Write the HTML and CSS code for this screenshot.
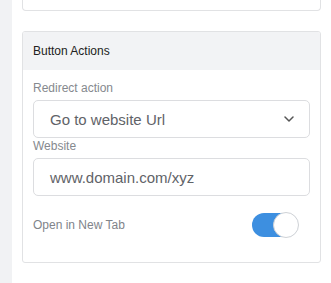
FILE: index.html
```html
<!DOCTYPE html>
<html>
<head>
<meta charset="utf-8">
<link rel="stylesheet" href="styles.css">
</head>
<body>
<div class="layout">
  <div class="sidebar"></div>
  <div class="main">
    <div class="card card-top"></div>
    <div class="card panel">
      <div class="panel-head">Button Actions</div>
      <div class="panel-body">
        <div class="label">Redirect action</div>
        <div class="field select">
          <span>Go to website Url</span>
          <svg class="chev" width="10" height="6" viewBox="0 0 10 6"><path d="M1 1 L5 5 L9 1" fill="none" stroke="#555" stroke-width="1.5" stroke-linecap="round" stroke-linejoin="round"/></svg>
        </div>
        <div class="label label-2">Website</div>
        <div class="field">www.domain.com/xyz</div>
        <div class="toggle-row">
          <span class="toggle-label">Open in New Tab</span>
          <span class="toggle"><span class="knob"></span></span>
        </div>
      </div>
    </div>
  </div>
</div>
</body>
</html>
```

FILE: styles.css
```css
html, body {
  margin: 0;
  padding: 0;
  background: #ffffff;
  font-family: "Liberation Sans", Arial, sans-serif;
}
.layout {
  display: flex;
  height: 283px;
  overflow: hidden;
}
.sidebar {
  width: 12px;
  flex: none;
  background: #f1f2f4;
}
.main {
  flex: 1;
  padding: 0 10px;
}
.card {
  border: 1px solid #e1e2e4;
  background: #fff;
}
.card-top {
  height: 10px;
  border-top: none;
  border-radius: 0 0 4px 4px;
}
.panel {
  margin-top: 20px;
  border-radius: 3px;
  overflow: hidden;
}
.panel-head {
  height: 38px;
  line-height: 38px;
  background: #f2f3f5;
  padding-left: 10px;
  font-size: 12px;
  color: #222;
}
.panel-body {
  padding: 11px 10px 25px;
}
.label {
  font-size: 12px;
  line-height: 15px;
  color: #85898e;
  margin-bottom: 4px;
}
.label-2 {
  margin-top: 1px;
}
.field {
  height: 36px;
  border: 1px solid #dcdde0;
  border-radius: 5px;
  display: flex;
  align-items: center;
  padding: 0 15px 0 16px;
  font-size: 15px;
  color: #5f6368;
}
.select {
  justify-content: space-between;
}
.chev {
  display: block;
}
.toggle-row {
  margin-top: 17px;
  height: 24px;
  display: flex;
  align-items: center;
  justify-content: space-between;
  padding-right: 12px;
}
.toggle-label {
  font-size: 12px;
  color: #80848a;
}
.toggle {
  position: relative;
  width: 46px;
  height: 24px;
  border-radius: 12px;
  background: #3d8fe0;
}
.knob {
  position: absolute;
  right: -1px;
  top: -1px;
  width: 24px;
  height: 24px;
  border-radius: 50%;
  background: #fff;
  border: 1px solid #cfd2d6;
}
```
